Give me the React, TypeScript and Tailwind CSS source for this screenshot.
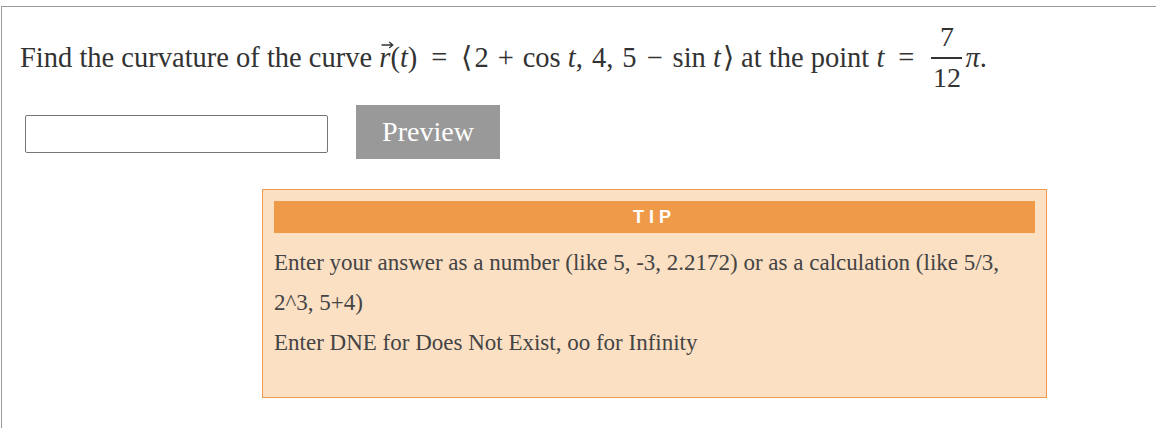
import React from 'react'

const serif = { fontFamily: '"Liberation Serif", "Times New Roman", serif' }

function Vec() {
  return (
    <span className="relative inline-block italic">
      r
      <svg className="absolute left-[2px] top-[3px]" width="13" height="8" viewBox="0 0 13 8">
        <path d="M0.5 4h11M8.2 1L11.8 4L8.2 7" fill="none" stroke="#333" strokeWidth="1.3" />
      </svg>
    </span>
  )
}

function Frac() {
  return (
    <span className="relative top-[-3px] inline-flex flex-col items-center align-middle mx-[3px] text-[28px] leading-none">
      <span className="px-[1px] pb-[6px]">7</span>
      <span className="w-[31px] h-[2px] bg-[#333]" />
      <span className="px-[1px] pt-[5px]">12</span>
    </span>
  )
}

export default function App() {
  return (
    <div className="w-full bg-white" style={serif}>
      <div className="mt-[6px] ml-[1px] min-h-[422px] border-t border-l border-[#9a9a9a] text-[#333]">
        {/* question */}
        <p className="pt-[19px] pl-[18px] text-[28.5px] leading-[40px]">
          Find the curvature of the curve <Vec />
          <span>(</span>
          <span className="italic">t</span>
          <span>)</span>
          <span className="mx-[14px]">=</span>
          <span className="mr-[2px]">⟨</span>
          <span>2</span>
          <span className="mx-[9px]">+</span>
          <span>cos </span>
          <span className="italic">t</span>
          <span className="mr-[9px]">,</span>
          <span>4</span>
          <span className="mr-[9px]">,</span>
          <span>5</span>
          <span className="mx-[10px]">−</span>
          <span>sin </span>
          <span className="italic">t</span>
          <span className="ml-[2px]">⟩</span> at the point <span className="italic">t</span>
          <span className="mx-[14px]">=</span>
          <Frac />
          <span className="italic">π</span>.
        </p>

        {/* answer row */}
        <div className="mt-[10px] flex items-start pl-[23px]">
          <input
            type="text"
            className="mt-[10px] h-[38px] w-[303px] rounded-[2px] border border-[#767676] bg-white"
          />
          <button className="ml-[28px] h-[54px] w-[144px] bg-[#999999] text-[28px] text-white">
            Preview
          </button>
        </div>

        {/* tip */}
        <div className="mt-[30px] ml-[260px] h-[209px] w-[785px] border border-[#f0994a] bg-[#fce0c4] px-[11px] pt-[11px]">
          <div
            className="flex h-[32px] items-center justify-center bg-[#ef9a48] text-[18px] font-bold tracking-[5px] text-white"
            style={{ fontFamily: '"Liberation Sans", Arial, sans-serif' }}
          >
            TIP
          </div>
          <div className="mt-[10px] text-[23px] leading-[40px] text-[#444]">
            <p>Enter your answer as a number (like 5, -3, 2.2172) or as a calculation (like 5/3, 2^3, 5+4)</p>
            <p>Enter DNE for Does Not Exist, oo for Infinity</p>
          </div>
        </div>
      </div>
    </div>
  )
}
